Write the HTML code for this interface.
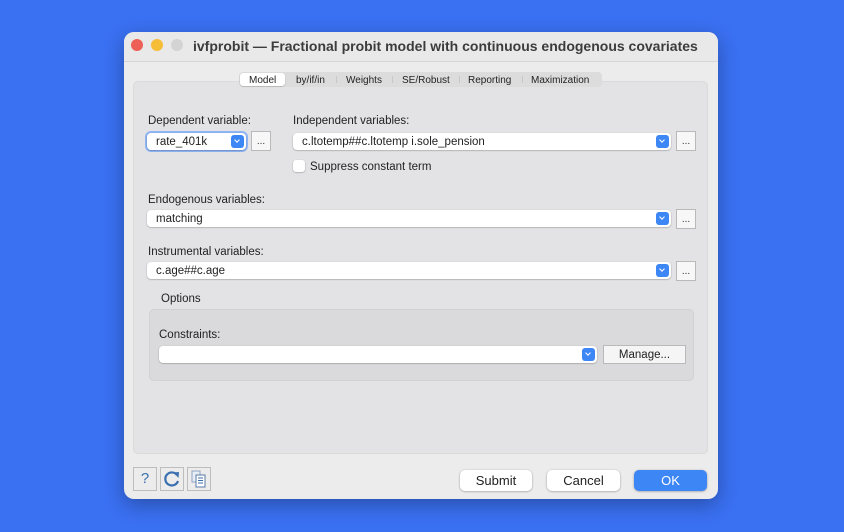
<!DOCTYPE html>
<html><head><meta charset="utf-8"><style>
*{box-sizing:border-box;margin:0;padding:0}
body{width:844px;height:532px;background:#3a70f2;font-family:"Liberation Sans",Arial,sans-serif;position:relative;overflow:hidden;color:#222}
.a{position:absolute}
.win{left:124px;top:32px;width:594px;height:467px;background:#ececec;border-radius:10px;box-shadow:0 6px 20px rgba(0,0,0,.3)}
.title{left:124px;top:32px;width:594px;height:30px;border-bottom:1px solid #d6d6d6;border-radius:10px 10px 0 0;background:#e9e9e9}
.dot{width:12px;height:12px;border-radius:50%;top:39px}
.panel{left:133px;top:81px;width:575px;height:373px;background:#e3e3e5;border:1px solid #dadada;border-radius:5px}
.lbl{font-size:11.5px;color:#222}
.combo{height:17px;background:#fff;border-radius:4px;box-shadow:0 0.5px 1.5px rgba(0,0,0,.35);font-size:11.5px;padding:3px 0 0 9px}
.chev{width:13px;height:13px;background:#3d86f5;border-radius:3px;top:2px;right:2px;position:absolute}
.chev:after{content:"";position:absolute;left:4px;top:3px;width:3px;height:3px;border-right:1.3px solid #fff;border-bottom:1.3px solid #fff;transform:rotate(45deg)}
.dots{width:20px;height:20px;background:#f7f7f7;border:1px solid #b9b9b9;font-size:10px;text-align:center;line-height:20px;color:#333}
.btn{height:21px;background:#fff;border-radius:5px;box-shadow:0 0.5px 2px rgba(0,0,0,.35);font-size:13px;text-align:center;line-height:21px}
.ib{width:24px;height:24px;border:1px solid #bdbdbd;background:#ececec;top:467px}
.t{font-size:10px;top:75px}
</style></head><body>
<div class="a win"></div>
<div class="a title"></div>
<div class="a dot" style="left:131px;background:#ed5f57"></div>
<div class="a dot" style="left:151px;background:#f5bd38"></div>
<div class="a dot" style="left:171px;background:#d3d3d3"></div>
<div class="a" style="left:193px;top:38px;font-size:14px;font-weight:bold;color:#3c3c3c">ivfprobit — Fractional probit model with continuous endogenous covariates</div>
<div class="a panel"></div>
<div class="a" style="left:239px;top:72px;width:363px;height:15px;background:#dcdcdc;border-radius:4px"></div>
<div class="a" style="left:240px;top:73px;width:45px;height:13px;background:#fff;border-radius:3px;box-shadow:0 0.5px 1px rgba(0,0,0,.3)"></div>
<div class="a t" style="left:249px">Model</div>
<div class="a t" style="left:296px">by/if/in</div>
<div class="a t" style="left:346px">Weights</div>
<div class="a t" style="left:402px">SE/Robust</div>
<div class="a t" style="left:468px">Reporting</div>
<div class="a t" style="left:531px">Maximization</div>
<div class="a" style="left:336px;top:76px;width:1px;height:7px;background:#c8c8c8"></div>
<div class="a" style="left:392px;top:76px;width:1px;height:7px;background:#c8c8c8"></div>
<div class="a" style="left:459px;top:76px;width:1px;height:7px;background:#c8c8c8"></div>
<div class="a" style="left:522px;top:76px;width:1px;height:7px;background:#c8c8c8"></div>

<div class="a lbl" style="left:148px;top:115px">Dependent variable:</div>
<div class="a lbl" style="left:293px;top:115px">Independent variables:</div>
<div class="a" style="left:145px;top:131px;width:103px;height:21px;border-radius:6px;background:#8fb6f5"></div>
<div class="a combo" style="left:147px;top:133px;width:99px">rate_401k<span class="chev"></span></div>
<div class="a dots" style="left:251px;top:131px">...</div>
<div class="a combo" style="left:293px;top:133px;width:378px">c.ltotemp##c.ltotemp i.sole_pension<span class="chev"></span></div>
<div class="a dots" style="left:676px;top:131px">...</div>
<div class="a" style="left:293px;top:160px;width:12px;height:12px;background:#fff;border-radius:3px;box-shadow:0 0.5px 1.5px rgba(0,0,0,.35)"></div>
<div class="a lbl" style="left:310px;top:161px">Suppress constant term</div>

<div class="a lbl" style="left:148px;top:194px">Endogenous variables:</div>
<div class="a combo" style="left:147px;top:210px;width:524px">matching<span class="chev"></span></div>
<div class="a dots" style="left:676px;top:209px">...</div>
<div class="a lbl" style="left:148px;top:246px">Instrumental variables:</div>
<div class="a combo" style="left:147px;top:262px;width:524px">c.age##c.age<span class="chev"></span></div>
<div class="a dots" style="left:676px;top:261px">...</div>

<div class="a lbl" style="left:161px;top:293px">Options</div>
<div class="a" style="left:149px;top:309px;width:545px;height:72px;background:#dadadc;border:1px solid #d2d2d2;border-radius:5px"></div>
<div class="a lbl" style="left:159px;top:329px">Constraints:</div>
<div class="a combo" style="left:159px;top:346px;width:438px"><span class="chev"></span></div>
<div class="a" style="left:603px;top:345px;width:83px;height:19px;background:#f5f5f5;border:1px solid #b9b9b9;font-size:11.5px;text-align:center;line-height:18px">Manage...</div>

<div class="a ib" style="left:133px;font-size:15px;color:#3a6fb0;text-align:center;line-height:22px">?</div>
<div class="a ib" style="left:160px"><svg width="22" height="22" viewBox="0 0 22 22"><path d="M16 7A6.5 6.5 0 1 0 17 13" fill="none" stroke="#3a6fb0" stroke-width="2.2"/><path d="M12.5 4.5L18 4L17.5 10Z" fill="#3a6fb0"/></svg></div>
<div class="a ib" style="left:187px"><svg width="22" height="22" viewBox="0 0 22 22"><rect x="4" y="3" width="8" height="11" fill="#e8eef6" stroke="#8fa4c0"/><rect x="8" y="7" width="9" height="12" fill="#fff" stroke="#5a7aa8"/><path d="M10 10h5M10 12.5h5M10 15h5" stroke="#3a6fb0"/></svg></div>
<div class="a btn" style="left:460px;top:470px;width:72px">Submit</div>
<div class="a btn" style="left:547px;top:470px;width:73px">Cancel</div>
<div class="a btn" style="left:634px;top:470px;width:73px;background:#3d86f5;color:#fff">OK</div>
</body></html>
